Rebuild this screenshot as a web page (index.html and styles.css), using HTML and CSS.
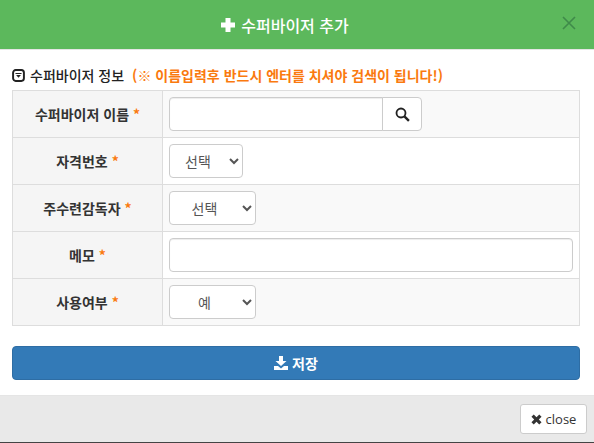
FILE: index.html
```html
<!DOCTYPE html>
<html lang="ko">
  <head>
    <meta charset="UTF-8" />
    <title>수퍼바이저 추가</title>
    <link rel="stylesheet" href="styles.css">
  </head>
  <body>
    <div class="modal">
      <div class="modal-header">
        <h4 class="modal-title">
          <svg class="icon-plus" viewBox="0 0 16 16"><path d="M5.5 1h5v4.5H15v5h-4.5V15h-5v-4.5H1v-5h4.5z" fill="#fff" /></svg>
          수퍼바이저 추가
        </h4>
        <span class="btn-x">
          <svg viewBox="0 0 14 14" width="14" height="14"><path d="M1 1l12 12M13 1L1 13" stroke="#3f8a4a" stroke-width="1.6" fill="none" /></svg>
        </span>
      </div>
      <div class="modal-body">
        <div class="section-title">
          <svg class="icon-box" viewBox="0 0 12 12"><rect x="1" y="1" width="10" height="10" rx="2.4" fill="none" stroke="#222" stroke-width="1.8" /><path d="M3.2 3.6h5.6v1H3.2zM3.8 5.6h4.4L6 8z" fill="#222" /></svg>
          <span>수퍼바이저 정보</span>
          <span class="notice">(※ 이름입력후 반드시 엔터를 치셔야 검색이 됩니다!)</span>
        </div>
        <table class="form-table">
          <tr>
            <th>수퍼바이저 이름 <em>*</em></th>
            <td>
              <div class="input-group">
                <input type="text" class="form-control" />
                <button class="btn-search">
                  <svg viewBox="0 0 14 14" width="15" height="15"><circle cx="5.6" cy="5.6" r="4.2" fill="none" stroke="#222" stroke-width="1.7" /><path d="M8.8 8.8l4.2 4.2" stroke="#222" stroke-width="2.2" /></svg>
                </button>
              </div>
            </td>
          </tr>
          <tr>
            <th>자격번호 <em>*</em></th>
            <td>
              <select class="form-select select-sm"><option>선택</option></select>
            </td>
          </tr>
          <tr>
            <th>주수련감독자 <em>*</em></th>
            <td>
              <select class="form-select"><option>선택</option></select>
            </td>
          </tr>
          <tr>
            <th>메모 <em>*</em></th>
            <td><input type="text" class="form-control full" /></td>
          </tr>
          <tr>
            <th>사용여부 <em>*</em></th>
            <td>
              <select class="form-select"><option>예</option></select>
            </td>
          </tr>
        </table>
        <button class="btn-save">
          <svg viewBox="0 0 14 14" width="14" height="14"><path d="M5 0h4v5h3.5L7 10 1.500 5H5zM0 10h4l3 2.500L10 10h4v4H0z" fill="#fff" /></svg>
          저장
        </button>
      </div>
      <div class="modal-footer">
        <button class="btn-close">
          <svg viewBox="0 0 12 12" width="11" height="11"><path d="M0.500 3l2.500-2.500 3 3 3-3L11.500 3l-3 3 3 3L9 11.500l-3-3-3 3L0.500 9l3-3z" fill="#333" /></svg>
          close
        </button>
      </div>
    </div>
  </body>
</html>
```

FILE: styles.css
```css
* {
  box-sizing: border-box;
}
body {
  margin: 0;
  font-family: "Noto Sans CJK KR", "Noto Sans", sans-serif;
  font-size: 14px;
  color: #333;
  background-color: #fff;
}
.modal {
  width: 594px;
  height: 443px;
  display: flex;
  flex-direction: column;
  border-bottom: 1px solid #444;
}
.modal-header {
  height: 50px;
  background-color: #5cb85c;
  border-bottom: 1px solid #e5e5e5;
  display: flex;
  align-items: center;
  justify-content: center;
  position: relative;
}
.modal-title {
  margin: 0 25px 0 0;
  font-size: 16px;
  font-weight: 500;
  color: #fff;
  display: flex;
  align-items: center;
  gap: 5px;
}
.icon-plus {
  width: 16px;
  height: 16px;
}
.btn-x {
  position: absolute;
  right: 18px;
  top: 16px;
  line-height: 0;
}
.modal-body {
  flex: 1;
  padding: 15px 14px 0 12px;
}
.section-title {
  height: 25px;
  display: flex;
  align-items: center;
  font-weight: 500;
  color: #222;
  padding-bottom: 5px;
}
.icon-box {
  width: 13px;
  height: 13px;
  margin-right: 5px;
}
.notice {
  margin-left: 8px;
  color: #fa7a0f;
  font-weight: 700;
}
.form-table {
  width: 568px;
  border-collapse: collapse;
  table-layout: fixed;
}
.form-table th,
.form-table td {
  border: 1px solid #ddd;
  height: 47px;
  padding: 0;
}
.form-table th {
  width: 150px;
  background-color: #f5f5f5;
  font-weight: 700;
  color: #333;
  text-align: center;
}
.form-table td {
  padding: 0 6px;
}
.form-table tr:nth-child(odd) td {
  background-color: #f9f9f9;
}
.form-table em {
  font-style: normal;
  font-weight: 700;
  color: #fa7a0f;
}
.input-group {
  display: flex;
  width: 253px;
}
.form-control {
  height: 34px;
  border: 1px solid #ccc;
  border-radius: 4px;
  background-color: #fff;
  box-shadow: inset 0 1px 1px rgba(0, 0, 0, 0.075);
}
.input-group .form-control {
  width: 214px;
  border-radius: 4px 0 0 4px;
}
.form-control.full {
  width: 404px;
  display: block;
}
.btn-search {
  width: 40px;
  height: 34px;
  margin-left: -1px;
  border: 1px solid #ccc;
  border-radius: 0 4px 4px 0;
  background-color: #fff;
  padding: 0;
  display: flex;
  align-items: center;
  justify-content: center;
  flex-shrink: 0;
}
.form-select {
  display: block;
  width: 87px;
  height: 34px;
  padding-right: 4px;
  border: 1px solid #ccc;
  border-radius: 4px;
  background-color: #fff;
  color: #555;
  font-family: inherit;
  font-size: 14px;
  text-align: center;
}
.select-sm {
  width: 74px;
}
.btn-save {
  width: 568px;
  height: 34px;
  margin-top: 20px;
  background-color: #337ab7;
  border: 1px solid #2e6da4;
  border-radius: 4px;
  color: #fff;
  font-family: inherit;
  font-size: 14px;
  font-weight: 700;
  display: flex;
  align-items: center;
  justify-content: center;
  gap: 4px;
}
.modal-footer {
  height: 47px;
  background-color: #e9e9e9;
  border-top: 1px solid #e5e5e5;
  padding: 8px 7px 0 0;
  display: flex;
  justify-content: flex-end;
  align-items: flex-start;
}
.btn-close {
  width: 67px;
  height: 30px;
  border: 1px solid #ccc;
  border-radius: 3px;
  background-color: #fff;
  color: #333;
  font-family: "Open Sans", sans-serif;
  font-size: 13px;
  display: flex;
  align-items: center;
  justify-content: center;
  gap: 4px;
  padding: 0;
}
```
